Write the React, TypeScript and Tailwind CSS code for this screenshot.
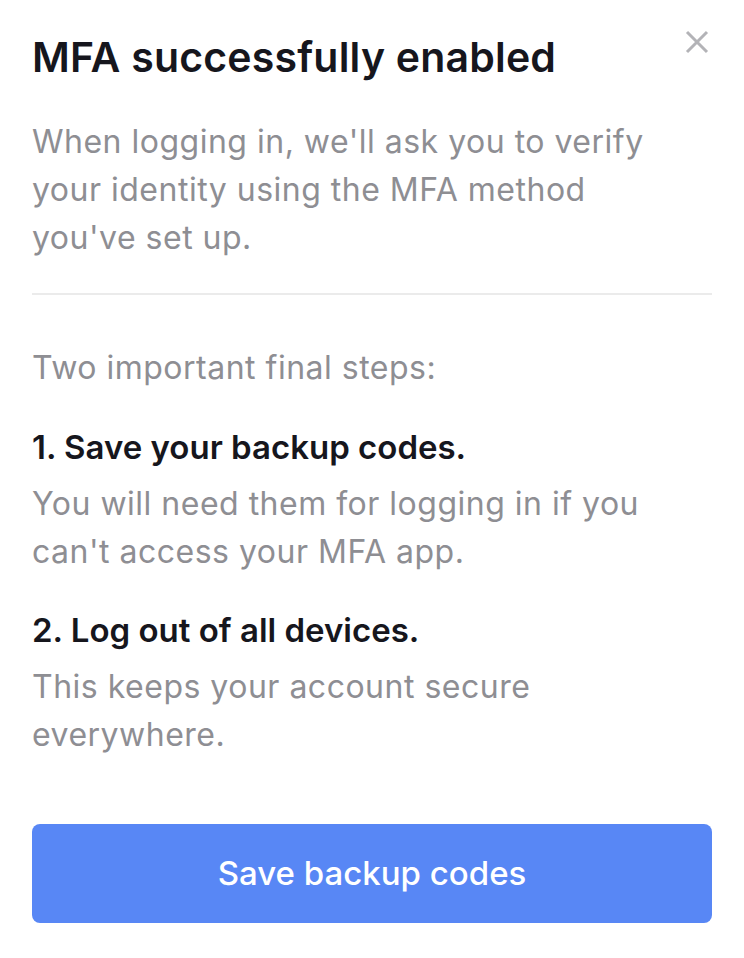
import React from 'react';

export default function App() {
  return (
    <div className="min-h-screen bg-white font-['Inter','Noto_Sans',sans-serif]">
      <div className="px-8 pt-[33px] pb-8">
        <div className="flex items-start justify-between">
          <h1 className="text-[41px] leading-[48px] font-semibold tracking-[0.2px] text-[#16161d]">
            MFA successfully enabled
          </h1>
          <button className="mt-[-3px] mr-[3px] text-[#b3b3b7]" aria-label="Close">
            <svg width="24" height="24" viewBox="0 0 24 24" fill="none" stroke="currentColor" strokeWidth="3">
              <path d="M2 2L22 22M22 2L2 22" />
            </svg>
          </button>
        </div>

        <p className="mt-[37px] pr-[30px] text-[32px] leading-[48px] tracking-[0.5px] text-[#8e8e93]">
          When logging in, we'll ask you to verify your identity using the MFA method you've set up.
        </p>

        <div className="mt-[31px] h-[2px] bg-[#ebebeb]" />

        <p className="mt-[49px] text-[32px] leading-[48px] tracking-[0.5px] text-[#8e8e93]">Two important final steps:</p>

        <div className="mt-[31px]">
          <h3 className="text-[33px] leading-[48px] font-semibold text-[#16161d]">1. Save your backup codes.</h3>
          <p className="mt-[9px] text-[32px] leading-[48px] tracking-[0.5px] text-[#8e8e93]">
            You will need them for logging in if you can't access your MFA app.
          </p>
        </div>

        <div className="mt-[30px]">
          <h3 className="text-[33px] leading-[48px] font-semibold text-[#16161d]">2. Log out of all devices.</h3>
          <p className="mt-[9px] text-[32px] leading-[48px] tracking-[0.5px] text-[#8e8e93]">
            This keeps your account secure everywhere.
          </p>
        </div>

        <button className="mt-[65px] w-full h-[99px] rounded-lg bg-[#5887f5] text-white text-[33px] font-medium">
          Save backup codes
        </button>
      </div>
    </div>
  );
}
